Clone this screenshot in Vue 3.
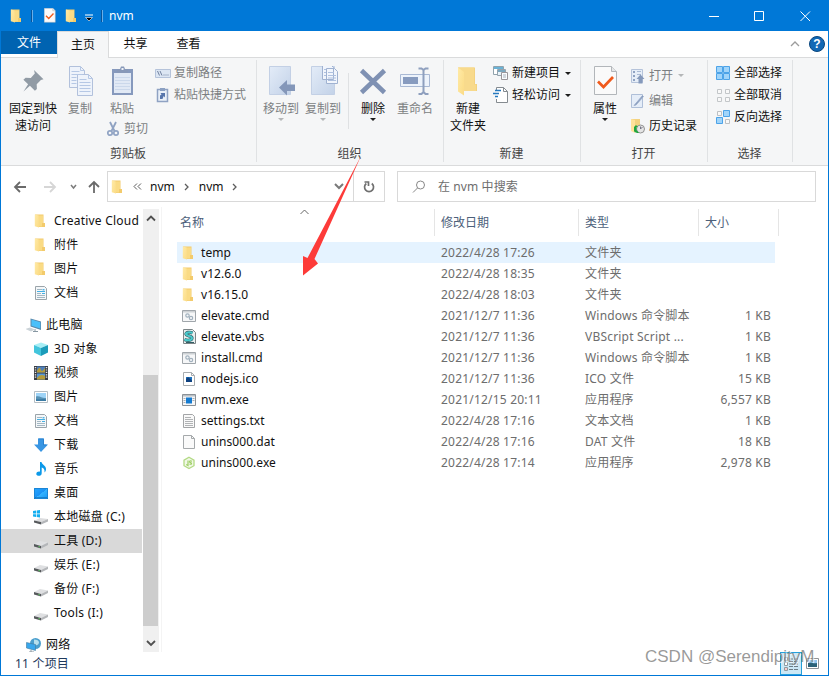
<template>
  <div class="window">
    <svg class="defs" width="0" height="0">
      <linearGradient id="g-folder" x1="0" y1="0" x2="1" y2="1">
        <stop offset="0" stop-color="#ffeaa6" /><stop offset="1" stop-color="#fbdb85" />
      </linearGradient>
      <linearGradient id="g-blue" x1="0" y1="0" x2="1" y2="1">
        <stop offset="0" stop-color="#e3ecf8" /><stop offset="1" stop-color="#c3d2e8" />
      </linearGradient>
      <linearGradient id="g-screen" x1="0" y1="0" x2="1" y2="1">
        <stop offset="0" stop-color="#27a7ff" /><stop offset=".5" stop-color="#1b92f5" /><stop offset=".51" stop-color="#35b3ff" /><stop offset="1" stop-color="#1495f5" />
      </linearGradient>

      <symbol id="folder" viewBox="0 0 16 16">
        <path d="M2 1.500h8.500V10H12v4H6z" fill="#f3cb6c" />
        <path d="M1.800 1.500l4.200 1v12l-4.200-1.200z" fill="url(#g-folder)" />
        <path d="M5.500 2.500H10V10h-1v3.500H6z" fill="#fadb85" />
      </symbol>
      <symbol id="folder-big" viewBox="0 0 32 32">
        <path d="M6 1.500h17V18h2v7H12z" fill="#f3d280" />
        <path d="M6 1.500h16v17h2V25H12z" fill="#f8da8c" />
        <path d="M6 1.500l6 4.500v23.500l-6-4z" fill="url(#g-folder)" />
      </symbol>
      <symbol id="pin" viewBox="0 0 32 32">
        <path d="M17 4l9.500 9.200-2.600.8-4.200 4.200.2 4.800-2 1.800-5-5-6.400 5.600 4.600-7.200-4.700-4.500 2.200-1.900 5.200.1 4-4.400z" fill="#919ba5" />
      </symbol>
      <symbol id="copy" viewBox="0 0 32 32">
        <g fill="#eef3fb" stroke="#b2c1dc">
          <path d="M5.500.5h11l4 4v17h-15z" /><path d="M13.500 8.500h11l4 4v17h-15z" />
        </g>
        <path d="M7.500 5.500h8M7.500 8.500h11M7.500 11.500h5M7.500 14.500h5M7.500 17.500h5M15.500 13.500h7M15.500 16.500h11M15.500 19.500h11M15.500 22.500h11M15.500 25.500h11M16.500.5v4h4M24.500 8.500v4h4" fill="none" stroke="#b6c8e5" />
      </symbol>
      <symbol id="paste" viewBox="0 0 32 32">
        <path d="M6 3h21v26H6z" fill="#8699bd" />
        <path d="M8 7h17v20H8z" fill="#e1e9f5" />
        <path d="M9 11.500h15M9 14.500h15M9 17.500h15M9 20.500h15M9 23.500h15" stroke="#cbd8eb" />
        <path d="M11 7V3h3l1-2.500h3L19 3h3v4z" fill="#8798b8" />
        <path d="M15.500 2h2v2h-2z" fill="#eef2f8" />
      </symbol>
      <symbol id="cut" viewBox="0 0 16 16">
        <path d="M5 1l4.500 9M11 1L6.500 10" stroke="#8fa2c2" stroke-width="1.800" />
        <g fill="none" stroke="#91a4c4" stroke-width="1.700"><circle cx="5" cy="12" r="2.200" /><circle cx="11" cy="12" r="2.200" /></g>
      </symbol>
      <symbol id="path" viewBox="0 0 16 16">
        <path d="M.5 4.500h15v8H.5z" fill="#dce6f3" stroke="#b5c3da" />
        <path d="M2.500 6l2 4.500M5 6l2 4.500M8.500 10h1M10.500 10h1M12.500 10h1" stroke="#71819f" />
      </symbol>
      <symbol id="shortcut" viewBox="0 0 16 16">
        <path d="M2.500 2.500h10v12h-10z" fill="#eaf0f8" stroke="#8fa2c3" stroke-width="1.500" />
        <path d="M5 1h5v3H5z" fill="#8ba0c2" />
        <path d="M5 12V8.500l1.500-1L5.500 6H10v4.500L8.700 9 7.500 12z" fill="#5876ab" />
      </symbol>
      <symbol id="move-to" viewBox="0 0 32 32">
        <path d="M4.500.5h21v28h-21z" fill="url(#g-blue)" stroke="#c3d0e5" />
        <path d="M14 21.500l8-7.500v4.500h8v6.500h-8v4.500z" fill="#8497b9" />
      </symbol>
      <symbol id="copy-to" viewBox="0 0 32 32">
        <path d="M4.500.5h23v28h-23z" fill="url(#g-blue)" stroke="#c3d0e5" />
        <path d="M15.500-.5h9l2 2v12h-11zM19.500 2.500h8l3 3v12h-11z" fill="#f1f5fc" stroke="#a0b2d1" />
        <path d="M17 3.500h2M17 6.500h2M17 9.500h2M21 6.500h6M21 9.500h8M21 12h8M21 14.500h8" stroke="#afc1df" />
      </symbol>
      <symbol id="delete" viewBox="0 0 32 32">
        <path d="M4.500 4.500l23 22M27.500 4.500l-23 22" stroke="#7f91b3" stroke-width="4.600" />
      </symbol>
      <symbol id="rename" viewBox="0 0 32 32">
        <path d="M1.500 8.500h29v12h-29z" fill="#edf3fb" stroke="#a9b9d4" />
        <path d="M4 11h15v7H4z" fill="#879bbf" />
        <path d="M19.500 2.500h3l2 1.500v22l-2 2h-3M29.500 2.500h-3l-2 1.500M24.500 26l2 2h3" fill="none" stroke="#8e9fbe" stroke-width="2" />
      </symbol>
      <symbol id="new-item" viewBox="0 0 16 16">
        <path d="M.5 1.500h10v8H.5z" fill="#fff" stroke="#90a2ac" /><path d="M1 2h9v2H1z" fill="#69b2d6" />
        <path d="M4.500 4.500h8v6h-8z" fill="#e7f2f8" stroke="#95a3ad" /><path d="M5 5h7v2H5z" fill="#7ba7bf" />
        <path d="M8.500 7.500h6v7h-6z" fill="#fafcff" stroke="#9b969a" /><path d="M10 10h3M10 12h3" stroke="#a8b3bc" />
      </symbol>
      <symbol id="easy" viewBox="0 0 16 16">
        <path d="M3.500.5h7l4 4v11h-11z" fill="#fff" stroke="#858b90" /><path d="M10.500.5v4h4" fill="none" stroke="#858b90" />
        <path d="M3 3h1v9H3z" fill="#fff" />
        <path d="M2 3.500h6M0 6.500h6M2 9.500h3" stroke="#2679be" stroke-width="1.400" />
      </symbol>
      <symbol id="props" viewBox="0 0 32 32">
        <path d="M5.500.5h17l5 5v23h-22z" fill="#fafafa" stroke="#b2b6ba" /><path d="M22.500.5v5h5" fill="#e6e7e8" stroke="#b2b6ba" />
        <path d="M9 15.500l5.500 5.500 9.500-10" fill="none" stroke="#f05a1c" stroke-width="2.700" />
      </symbol>
      <symbol id="open" viewBox="0 0 16 16">
        <path d="M1.500 1.500h11v13h-11z" fill="#e6eef8" stroke="#b5c3da" /><path d="M3 3h2v2H3zM3 7h2v2H3zM3 11h2v2H3z" fill="#8fa2c2" />
        <path d="M7 3.500h4M7 6.500h4" stroke="#a9bad5" /><path d="M10.500 6.500l4 4.500h-2v4.500h-4V11h-2z" fill="#8599bb" />
      </symbol>
      <symbol id="edit" viewBox="0 0 16 16">
        <path d="M1.500 1.500h11v13h-11z" fill="#e5edf8" stroke="#afbfd8" /><path d="M4 12.500L12.500 2.500l1 1L6 12z" fill="#8599bb" stroke="#9aacca" stroke-width=".8" />
      </symbol>
      <symbol id="history" viewBox="0 0 16 16">
        <path d="M1 1h9v13H5z" fill="#f3d280" /><path d="M1 1l4 1v13l-4-2z" fill="#ffe29a" />
        <circle cx="10.500" cy="11" r="4" fill="#e5e5e5" stroke="#929292" /><path d="M10.500 8.500V11l2-2" fill="none" stroke="#778" />
        <path d="M4 13V9l2-2 2 2H6.500v3l2.500 3c-2.500 0-4.500-.5-5-2z" fill="#20a63e" />
      </symbol>
      <symbol id="select-all" viewBox="0 0 16 16">
        <path d="M1.500 1.500h6v6h-6zM8.500 1.500h6v6h-6zM1.500 8.500h6v6h-6zM8.500 8.500h6v6h-6z" fill="#a0d4fa" stroke="#4ca3e8" />
      </symbol>
      <symbol id="select-none" viewBox="0 0 16 16">
        <path d="M2.500 2.500h4v4h-4zM10.500 2.500h4v4h-4zM2.500 10.500h4v4h-4zM10.500 10.500h4v4h-4z" fill="#f9f9f9" stroke="#c3c6c9" />
      </symbol>
      <symbol id="invert" viewBox="0 0 16 16">
        <path d="M2.500 2.500h4v4h-4zM10.500 10.500h4v4h-4z" fill="#f9f9f9" stroke="#bdc0c3" />
        <path d="M8.500 1.500h6v6h-6zM1.500 8.500h6v6h-6z" fill="#a0d4fa" stroke="#4ca3e8" />
      </symbol>

      <symbol id="doc" viewBox="0 0 16 16">
        <path d="M2.500 1.500h9l2 2v11h-11z" fill="#f4f7f9" stroke="#9ba4aa" />
        <path d="M4 4.500h5M4 8.500h4M4 10.500h8M4 12.500h8" stroke="#a3b7c3" /><path d="M4 6.500h8M9 8.500h3" stroke="#45b0e4" />
        <path d="M9.500 4h2v1.500h-2z" fill="#56b5e4" />
      </symbol>
      <symbol id="pc" viewBox="0 0 16 16">
        <path d="M4.500 1.500l10.500 3v8.500L4.500 9.500z" fill="#5a86a8" /><path d="M5.500 2.500l8.800 2.700v6.200L5.500 8.800z" fill="#4bc0fa" />
        <path d="M9 12v2M7 14.500h5" stroke="#8797a2" /><path d="M-.5 12l4.500-1.500 5 2-4 2z" fill="#cbd3d8" />
      </symbol>
      <symbol id="cube" viewBox="0 0 16 16">
        <path d="M1 4l7-2.500L15 4l-7 3z" fill="#a7eef5" /><path d="M1 4l7 3v8l-7-3.500z" fill="#43c5dc" /><path d="M15 4L8 7v8l7-3.500z" fill="#1b9cba" />
      </symbol>
      <symbol id="video" viewBox="0 0 16 16">
        <path d="M1 1h14v14H1z" fill="#393d43" /><path d="M4 1.500h8v6H4z" fill="#4d7eb9" /><path d="M4 8.500h8v6H4z" fill="#5597d8" />
        <path d="M4 6c2-4 3-4 4-1s3-1 4-2v4.500H4zM4 13c2-3 5-4 8-2v3.500H4z" fill="#b59b3a" />
        <path d="M2.500 2v12M13.500 2v12" stroke="#e8e8e8" stroke-width="1.500" stroke-dasharray="1.200 1.200" />
      </symbol>
      <symbol id="picture" viewBox="0 0 16 16">
        <path d="M1.500 2.500h13v11h-13z" fill="#fff" stroke="#b5bec4" /><path d="M3 4h10v8H3z" fill="#9fd4f7" />
        <path d="M3 7.500c4-1 6 2 10 1.500v3H3z" fill="#5792b5" /><path d="M3 10c4 1 6-1 10 .5V12H3z" fill="#3b7ba4" />
      </symbol>
      <symbol id="download" viewBox="0 0 16 16">
        <path d="M5 1.500h6v6h4l-7 7.500-7-7.500h4z" fill="#3996e3" /><path d="M5.500 2h5v6h3" fill="none" stroke="#2b82cf" />
      </symbol>
      <symbol id="music" viewBox="0 0 16 16">
        <path d="M7 1h1.500c.5 3 4.500 3.500 4.500 7 0 1.500-.5 2.500-1.500 3.500C12 8.500 10.500 7 8.700 6.500v5.800c0 3.500-5.700 3.200-5.400.4.200-1.700 2-2.400 3.700-2z" fill="#0b99e9" />
      </symbol>
      <symbol id="desktop" viewBox="0 0 16 16">
        <path d="M1 3h14v11H1z" fill="url(#g-screen)" /><path d="M1 12.500h14V14H1z" fill="#0c5d9e" /><path d="M1.500 3.500h13v10h-13z" fill="none" stroke="#1b85d5" />
      </symbol>
      <symbol id="drive" viewBox="0 0 16 16">
        <path d="M1 11l6-3 8 1.500-7 3.500z" fill="#dfe0e2" /><path d="M1 11l7 2v2.500l-7-2z" fill="#56595c" /><path d="M15 9.500V12l-7 3.500V13z" fill="#b4b6b9" />
        <path d="M5.500 13.500l1.500.5" stroke="#5fd063" />
      </symbol>
      <symbol id="drive-c" viewBox="0 0 16 16">
        <path d="M1 12l6-3 8 1-7 3z" fill="#dcdddf" /><path d="M1 11.500l7 1.500v2.500l-7-2z" fill="#56595c" /><path d="M15 10v2.500l-7 3V13z" fill="#b4b6b9" />
        <path d="M0 2l3-.5V4.500H0zM3.700 1.400L7 1v3.500H3.700zM0 5.200h3V8l-3-.4zM3.700 5.200H7v3.300L3.700 8z" fill="#13aef0" />
      </symbol>
      <symbol id="network" viewBox="0 0 16 16">
        <circle cx="9.500" cy="6.500" r="5.500" fill="#4b9fce" /><path d="M8 2.500c3 0 5 1 5 3s-3 4-5 2z" fill="#b5dfed" />
        <path d="M.5 5.500l9 2v6l-9-2.500z" fill="#38a7ed" stroke="#43789b" stroke-width=".6" /><path d="M5 13v2M3 15h5" stroke="#8a969e" />
      </symbol>

      <symbol id="cmd" viewBox="0 0 16 16">
        <path d="M1.500 2.500h13v11h-13z" fill="#f6f7f8" stroke="#a0a6ab" /><path d="M2 3h12v1.500H2z" fill="#cdd1d4" />
        <g fill="none" stroke="#a2b1be" stroke-width="1.200"><circle cx="6.500" cy="7.500" r="1.700" /><circle cx="10" cy="10" r="1.700" /></g>
      </symbol>
      <symbol id="vbs" viewBox="0 0 16 16">
        <path d="M2.500.5h9l3 3v11h-12z" fill="#e9f0f0" stroke="#7c8587" />
        <path d="M11.500 4c-3-1.500-7-.5-6.500 1.300s6 1.500 6 3.700-4 3-7.500 1.500" fill="none" stroke="#345d65" stroke-width="3.200" />
        <path d="M11.500 4c-3-1.500-7-.5-6.500 1.300s6 1.500 6 3.700-4 3-7.500 1.500" fill="none" stroke="#49c9cb" stroke-width="2.100" />
        <path d="M5 13.500h8" stroke="#345d65" />
      </symbol>
      <symbol id="ico" viewBox="0 0 16 16">
        <path d="M2.500 1.500h8l3 3v10h-11z" fill="#fff" stroke="#a8acaf" /><path d="M10.500 1.500v3h3" fill="none" stroke="#a8acaf" />
        <path d="M5 6h6v5H5z" fill="#1e72bd" /><path d="M5 8l2-2 4 3.500V11H5z" fill="#0e4180" />
      </symbol>
      <symbol id="exe" viewBox="0 0 16 16">
        <path d="M1.500 2.500h13v11h-13z" fill="#f5f6f7" stroke="#8b9197" /><path d="M2 3h12v1.500H2z" fill="#bac0c5" />
        <path d="M5 5.500h6v6H5z" fill="#147bd1" /><path d="M2.500 6.500h2M2.500 8.500h2M2.500 10.500h2M11.500 6.500h2M11.500 8.500h2" stroke="#abb1b7" />
      </symbol>
      <symbol id="txt" viewBox="0 0 16 16">
        <path d="M2.500 1.500h9l2 2v11h-11z" fill="#f9f9f9" stroke="#a3a5a7" /><path d="M4 4.500h6M4 6.500h8M4 8.500h8M4 10.500h8M4 12.500h8" stroke="#b1b3b5" />
      </symbol>
      <symbol id="dat" viewBox="0 0 16 16">
        <path d="M2.500 1.500h8l3 3v10h-11z" fill="#fafafa" stroke="#a5a9ab" /><path d="M10.500 1.500v3h3" fill="none" stroke="#a5a9ab" />
      </symbol>
      <symbol id="node" viewBox="0 0 16 16">
        <path d="M8 2.200l5 2.900v5.600L8 13.600l-5-2.900V5.100z" fill="#f1f8e7" stroke="#b3da85" stroke-width="1.300" />
        <path d="M7 5.500v5l-1.800-1M11 6.200c-3-1-3 1-1.500 1.400s1.500 2-1 1.600" fill="none" stroke="#a0cf68" stroke-width="1.200" />
      </symbol>
    </svg>

    <header class="titlebar">
      <svg class="icon quick-folder"><use href="#folder" /></svg>
      <i class="bar"></i>
      <svg class="icon quick-props" viewBox="5 0 24 30"><use href="#props" width="32" height="32" /></svg>
      <svg class="icon quick-new"><use href="#folder" /></svg>
      <svg class="quick-more" width="8" height="8"><path d="M0 1h8" stroke="#fff" /><path d="M.5 3.500h7L4 7z" fill="#000" stroke="#fff" stroke-width=".6" /></svg>
      <i class="bar"></i>
      <span class="title">nvm</span>
      <svg class="controls" width="120" height="20" fill="none" stroke="#fff">
        <path d="M9 10.500h10M54.500 5.500h9v9h-9zM100.500 5.500l9.500 9.500M110 5.500L100.500 15" />
      </svg>
    </header>

    <nav class="tabs">
      <span class="tab file">文件</span>
      <span class="tab active">主页</span>
      <span class="tab">共享</span>
      <span class="tab">查看</span>
      <svg class="collapse" width="10" height="6"><path d="M1 5l4-4 4 4" fill="none" stroke="#9c9c9c" stroke-width="1.300" /></svg>
      <span class="help">?</span>
    </nav>

    <section class="ribbon">
      <div v-for="group in ribbon" :key="group.label" class="group" :class="group.cls">
        <div class="tools">
          <template v-for="(col, c) in group.cols" :key="c">
            <i v-if="col === '|'" class="split"></i>
            <div v-else class="col" :class="{ list: !col.big }">
              <div v-if="col.big" class="big" :class="[{ off: col.off }, col.big]">
                <svg class="icon32"><use :href="'#' + col.big" /></svg>
                <span v-for="line in col.lines" :key="line">{{ line }}</span>
                <i v-if="col.arrow" class="caret"></i>
              </div>
              <div v-for="item in col.items" :key="item.text" class="small" :class="{ off: item.off }">
                <svg class="icon"><use :href="'#' + item.icon" /></svg>
                <span>{{ item.text }}</span>
                <i v-if="item.arrow" class="caret"></i>
              </div>
            </div>
          </template>
        </div>
        <div class="group-label">{{ group.label }}</div>
      </div>
    </section>

    <section class="address-row">
      <svg class="nav-arrows" width="106" height="20" fill="none" stroke-width="1.800">
        <path d="M14 10h11M19 5l-5 5 5 5" stroke="#6a6a6a" />
        <path d="M43 10h11M49 5l5 5-5 5" stroke="#d6d6d6" />
        <path d="M70 8l2.500 3L75 8" stroke="#7c7c7c" stroke-width="1.500" />
        <path d="M93 16V5M88 10l5-5 5 5" stroke="#6a6a6a" />
      </svg>
      <div class="address">
        <svg class="icon"><use href="#folder" /></svg>
        <span class="chev">
          <svg width="9" height="7"><path d="M4 .5l-3 3 3 3M8 .5l-3 3 3 3" fill="none" stroke="#5d5d5d" /></svg>
        </span>
        <template v-for="(part, i) in ['nvm', 'nvm']" :key="i">
          <span class="crumb">{{ part }}</span>
          <svg class="crumb-sep" width="5" height="8"><path d="M1 1l3 3-3 3" fill="none" stroke="#5d5d5d" stroke-width="1.300" /></svg>
        </template>
        <svg class="drop" width="10" height="7"><path d="M1 1l4 4 4-4" fill="none" stroke="#7a7a7a" stroke-width="2" /></svg>
        <span class="refresh">
          <svg width="12" height="13" fill="none" stroke="#707070" stroke-width="1.700"><path d="M3.300 3.500A4.500 4.500 0 1 0 8.800 3.500M1.500 2h4v4" /></svg>
        </span>
      </div>
      <div class="search">
        <svg width="14" height="14" fill="none" stroke="#888"><circle cx="8.500" cy="5" r="4" /><path d="M5.500 8L1 12.500" /></svg>
        <span>在 nvm 中搜索</span>
      </div>
    </section>

    <main class="content">
      <aside class="tree">
        <div v-for="node in tree" :key="node.id" class="node" :class="{ root: node.root, selected: node.selected }">
          <svg class="icon"><use :href="'#' + node.icon" /></svg>
          <span>{{ node.text }}</span>
        </div>
      </aside>
      <div class="scrollbar">
        <svg width="10" height="7"><path d="M1 5.500l4-4 4 4" fill="none" stroke="#505050" stroke-width="1.800" /></svg>
        <div class="thumb"></div>
        <svg width="10" height="7"><path d="M1 1l4 4 4-4" fill="none" stroke="#505050" stroke-width="1.800" /></svg>
      </div>
      <div class="files">
        <div class="row head">
          <span class="name">名称</span>
          <span class="date">修改日期</span>
          <span class="type">类型</span>
          <span class="size">大小</span>
          <svg class="sort" width="9" height="6"><path d="M.5 5l4-4 4 4" fill="none" stroke="#666" /></svg>
        </div>
        <div v-for="file in files" :key="file.name" class="row" :class="{ hover: file.name === 'temp' }">
          <span class="name"><svg class="icon"><use :href="'#' + file.icon" /></svg>{{ file.name }}</span>
          <span class="date">{{ file.date }}</span>
          <span class="type">{{ file.type }}</span>
          <span class="size">{{ file.size }}</span>
        </div>
      </div>
    </main>

    <footer class="status">
      <span class="count">11 个项目</span>
      <span class="view on">
        <svg width="16" height="16"><path d="M1.500 1.500h3v3h-3zM1.500 6.500h3v3h-3zM1.500 11.500h3v3h-3z" fill="#fff" stroke="#8f9aa0" /><path d="M6 3h4M11 3h4M6 5.500h4M11 5.500h4M6 8h4M11 8h4M6 10.500h4M11 10.500h4M6 13.500h4M11 13.500h4" stroke="#6d7d86" /><path d="M2.500 12.500h1v1h-1z" fill="#d33" /></svg>
      </span>
      <span class="view">
        <svg width="14" height="12"><path d="M.5.5h12v10H.5z" fill="#fff" stroke="#8f9498" /><path d="M2 2h9v7H2z" fill="#8fc5ee" /><path d="M2 5c4-1 5 1 9 0v4H2z" fill="#2b6279" /></svg>
      </span>
    </footer>

    <div class="watermark">CSDN @SerendipityM</div>
    <svg class="pointer" width="62" height="124"><path d="M61 4L14.500 107l3.500 4.500L3 123.500V104l4.500 2z" fill="#fd3b39" /></svg>
  </div>
</template>

<script setup>
const ribbon = [
  {
    label: '剪贴板',
    cls: 'clipboard',
    cols: [
      { big: 'pin', lines: ['固定到快', '速访问'] },
      { big: 'copy', lines: ['复制'], off: true },
      { big: 'paste', lines: ['粘贴'], off: true, items: [{ icon: 'cut', text: '剪切', off: true }] },
      { items: [{ icon: 'path', text: '复制路径', off: true }, { icon: 'shortcut', text: '粘贴快捷方式', off: true }] }
    ]
  },
  {
    label: '组织',
    cls: 'organize',
    cols: [
      { big: 'move-to', lines: ['移动到'], off: true, arrow: true },
      { big: 'copy-to', lines: ['复制到'], off: true, arrow: true },
      '|',
      { big: 'delete', lines: ['删除'], arrow: true },
      { big: 'rename', lines: ['重命名'], off: true }
    ]
  },
  {
    label: '新建',
    cls: 'create',
    cols: [
      { big: 'folder-big', lines: ['新建', '文件夹'] },
      { items: [{ icon: 'new-item', text: '新建项目', arrow: true }, { icon: 'easy', text: '轻松访问', arrow: true }] }
    ]
  },
  {
    label: '打开',
    cls: 'opening',
    cols: [
      { big: 'props', lines: ['属性'], arrow: true },
      { items: [{ icon: 'open', text: '打开', off: true, arrow: true }, { icon: 'edit', text: '编辑', off: true }, { icon: 'history', text: '历史记录' }] }
    ]
  },
  {
    label: '选择',
    cls: 'selecting',
    cols: [
      { items: [{ icon: 'select-all', text: '全部选择' }, { icon: 'select-none', text: '全部取消' }, { icon: 'invert', text: '反向选择' }] }
    ]
  }
]

const tree = [
  { icon: 'folder', text: 'Creative Cloud' },
  { icon: 'folder', text: '附件' },
  { icon: 'folder', text: '图片' },
  { icon: 'doc', text: '文档' },
  { icon: 'pc', text: '此电脑', root: true },
  { icon: 'cube', text: '3D 对象' },
  { icon: 'video', text: '视频' },
  { icon: 'picture', text: '图片' },
  { icon: 'doc', text: '文档' },
  { icon: 'download', text: '下载' },
  { icon: 'music', text: '音乐' },
  { icon: 'desktop', text: '桌面' },
  { icon: 'drive-c', text: '本地磁盘 (C:)' },
  { icon: 'drive', text: '工具 (D:)', selected: true },
  { icon: 'drive', text: '娱乐 (E:)' },
  { icon: 'drive', text: '备份 (F:)' },
  { icon: 'drive', text: 'Tools (I:)' },
  { icon: 'network', text: '网络', root: true }
].map((node, id) => ({ id, ...node }))

const files = [
  { icon: 'folder', name: 'temp', date: '2022/4/28 17:26', type: '文件夹' },
  { icon: 'folder', name: 'v12.6.0', date: '2022/4/28 18:35', type: '文件夹' },
  { icon: 'folder', name: 'v16.15.0', date: '2022/4/28 18:03', type: '文件夹' },
  { icon: 'cmd', name: 'elevate.cmd', date: '2021/12/7 11:36', type: 'Windows 命令脚本', size: '1 KB' },
  { icon: 'vbs', name: 'elevate.vbs', date: '2021/12/7 11:36', type: 'VBScript Script ...', size: '1 KB' },
  { icon: 'cmd', name: 'install.cmd', date: '2021/12/7 11:36', type: 'Windows 命令脚本', size: '1 KB' },
  { icon: 'ico', name: 'nodejs.ico', date: '2021/12/7 11:36', type: 'ICO 文件', size: '15 KB' },
  { icon: 'exe', name: 'nvm.exe', date: '2021/12/15 20:11', type: '应用程序', size: '6,557 KB' },
  { icon: 'txt', name: 'settings.txt', date: '2022/4/28 17:16', type: '文本文档', size: '1 KB' },
  { icon: 'dat', name: 'unins000.dat', date: '2022/4/28 17:16', type: 'DAT 文件', size: '18 KB' },
  { icon: 'node', name: 'unins000.exe', date: '2022/4/28 17:14', type: '应用程序', size: '2,978 KB' }
]
</script>

<style>
body {
  margin: 0;
}
</style>

<style scoped>
.window {
  position: relative;
  display: flex;
  flex-direction: column;
  box-sizing: border-box;
  width: 829px;
  height: 676px;
  border: 1px solid #0078d7;
  border-top: 0;
  background: #fff;
  color: #111;
  font: 12px/18px "Noto Sans", "Noto Sans CJK SC", sans-serif;
  overflow: hidden;
  white-space: nowrap;
}

.window *, .window *::before {
  box-sizing: border-box;
}

.defs {
  position: absolute;
}

svg {
  display: block;
  flex: none;
}

.icon {
  width: 16px;
  height: 16px;
}

/* 标题栏 */
.titlebar {
  display: flex;
  align-items: center;
  flex: none;
  height: 31px;
  padding-left: 8px;
  background: #0078d7;
  color: #fff;
}
.bar {
  width: 2px;
  height: 12px;
  border-left: 1px solid #06549b;
  border-right: 1px solid #69aee8;
}
.quick-folder {
  margin-right: 6px;
}
.quick-props {
  width: 12px;
  height: 15px;
  margin-left: 11px;
}
.quick-new {
  margin-left: 8px;
}
.quick-more {
  margin: 4px 8px 0 5px;
}
.title {
  margin-left: 6px;
}
.controls {
  margin-left: auto;
  margin-right: 8px;
}

/* 选项卡 */
.tabs {
  display: flex;
  align-items: center;
  flex: none;
  height: 27px;
  border-bottom: 1px solid #dadbdc;
}
.tab {
  width: 53px;
  height: 27px;
  line-height: 26px;
  text-align: center;
}
.tab.file {
  width: 56px;
  height: 23px;
  line-height: 24px;
  margin-bottom: 4px;
  background: #0063b1;
  color: #fff;
}
.tab.active {
  width: 52px;
  height: 28px;
  margin-bottom: -2px;
  border: 1px solid #dadbdc;
  border-bottom: 0;
  background: #f5f6f7;
}
.collapse {
  margin-left: auto;
}
.help {
  width: 16px;
  height: 16px;
  margin: 0 3px 0 9px;
  border: 1px solid #0a477e;
  border-radius: 50%;
  background: #1269b5;
  color: #fff;
  font: bold 12px/14px "Liberation Sans", sans-serif;
  text-align: center;
}

/* 功能区 */
.ribbon {
  display: flex;
  flex: none;
  height: 108px;
  padding: 2px 0 3px;
  background: #f5f6f7;
  border-bottom: 1px solid #dadbdc;
}
.group {
  display: flex;
  flex-direction: column;
  flex: none;
  border-right: 1px solid #e0e2e4;
}
.group.clipboard { width: 256px; }
.group.organize { width: 187px; }
.group.create { width: 137px; }
.group.opening { width: 127px; }
.group.selecting { width: 85px; }
.tools {
  display: flex;
  flex: 1;
}
.clipboard .tools { padding-left: 6px; }
.organize .tools { padding-left: 3px; }
.create .tools { padding-left: 1px; }
.opening .tools { padding-left: 2px; }
.selecting .tools { padding-left: 7px; }
.col {
  width: 42px;
}
.col:first-child {
  width: 52px;
}
.organize .col:first-child {
  width: 42px;
}
.create .col:first-child {
  width: 46px;
}
.opening .col:first-child {
  width: 44px;
}
.big {
  display: flex;
  flex-direction: column;
  align-items: center;
  padding-top: 6px;
}
.big.pin span + span {
  margin-top: -1px;
}
.big.folder-big span + span {
  margin-top: -1px;
}
.icon32 {
  width: 32px;
  height: 32px;
  margin-bottom: 2px;
  overflow: visible;
}
.off {
  color: #7c7f82;
}
.caret {
  width: 0;
  height: 0;
  border: 3px solid transparent;
  border-top-color: #1c1c1c;
  border-bottom: 0;
}
.off .caret {
  border-top-color: #b4b6b8;
}
.small {
  display: flex;
  align-items: center;
  height: 22px;
}
.small .icon {
  margin-right: 2px;
}
.small .caret {
  margin-left: 5px;
}
.col .big + .small {
  height: 22px;
  padding-left: 4px;
}
.col .big + .small .icon {
  margin-right: 3px;
}
.list {
  width: auto;
  padding-top: 2px;
}
.clipboard .list {
  padding-left: 12px;
}
.clipboard .list .icon {
  margin-right: 3px;
}
.create .list {
  padding-left: 2px;
}
.create .list .icon {
  margin-right: 3px;
}
.opening .list {
  padding: 3px 0 0 3px;
}
.opening .list .icon {
  margin-right: 3px;
}
.opening .small {
  height: 25px;
}
.selecting .list .icon {
  margin-right: 3px;
}
.split {
  width: 1px;
  height: 56px;
  margin: 13px 3px 0 4px;
  background: #dfe1e3;
}
.group-label {
  height: 17px;
  padding-right: 1px;
  text-align: center;
  color: #444;
}

/* 地址栏 */
.address-row {
  display: flex;
  align-items: center;
  flex: none;
  height: 41px;
}
.address {
  display: flex;
  align-items: center;
  width: 278px;
  height: 31px;
  border: 1px solid #d9d9d9;
}
.address .icon {
  margin: 0 7px 0 2px;
}
.crumb {
  margin-left: 8px;
  line-height: 17px;
  margin-bottom: 1px;
}
.crumb-sep {
  margin-left: 9px;
}
.crumb-sep + .crumb {
  margin-left: 10px;
}
.drop {
  margin-left: auto;
  margin-right: 9px;
}
.refresh {
  display: flex;
  align-items: center;
  justify-content: center;
  width: 31px;
  height: 29px;
  border-left: 1px solid #d9d9d9;
}
.search {
  display: flex;
  align-items: center;
  width: 419px;
  height: 31px;
  margin-left: 12px;
  padding-left: 14px;
  border: 1px solid #d9d9d9;
  color: #6d6d6d;
}
.search span {
  margin-left: 12px;
  letter-spacing: 0.1px;
}

/* 导航窗格 */
.content {
  display: flex;
  flex: none;
  height: 445px;
}
.tree {
  width: 141px;
  padding-top: 2px;
  overflow: hidden;
  letter-spacing: 0.22px;
}
.node {
  display: flex;
  align-items: center;
  height: 24px;
  padding-left: 32px;
}
.node span {
  margin: -1px 0 0 5px;
}
.node.root {
  margin-top: 8px;
  padding-left: 25px;
}
.node.root span {
  margin-left: 4px;
}
.node.selected {
  background: #d9d9d9;
}
.scrollbar {
  display: flex;
  flex-direction: column;
  align-items: center;
  width: 16px;
  margin: 2px 0 0 1px;
  padding: 6px 0 5px;
  background: #f0f0f0;
}
.thumb {
  width: 15px;
  height: 251px;
  margin: auto 1px 14px 0;
  background: #cdcdcd;
}

/* 文件列表 */
.files {
  flex: 1;
  margin-left: 2px;
  padding-left: 15px;
  border-left: 1px solid #f4f4f4;
}
.row {
  display: flex;
  align-items: center;
  width: 598px;
  height: 21px;
  color: #6d6d6d;
}
.row.hover {
  background: #e5f3ff;
}
.name {
  display: flex;
  align-items: center;
  width: 264px;
  padding-left: 4px;
  color: #111;
  letter-spacing: 0.05px;
}
.name .icon {
  margin-right: 4px;
}
.date {
  width: 144px;
  letter-spacing: 0.2px;
}
.type {
  width: 120px;
  letter-spacing: 0.2px;
}
.size {
  width: 66px;
  text-align: right;
  letter-spacing: 0.2px;
}
.row.head {
  position: relative;
  width: 602px;
  height: 27px;
  margin: 2px 0 6px;
  color: #4c607a;
}
.head span {
  height: 27px;
  line-height: 27px;
  border-right: 1px solid #e5e5e5;
  letter-spacing: 0;
}
.head .name {
  width: 258px;
  padding-left: 3px;
  color: #4c607a;
}
.head .date,
.head .type,
.head .size {
  padding-left: 6px;
  text-align: left;
}
.head .size {
  width: 80px;
}
.sort {
  position: absolute;
  left: 123px;
  top: 0;
}

/* 状态栏 */
.status {
  display: flex;
  align-items: center;
  flex: 1;
  color: #1e395b;
}
.count {
  margin: 0 auto 0 14px;
  letter-spacing: 0.2px;
}
.view {
  display: flex;
  align-items: center;
  justify-content: center;
  width: 22px;
  height: 23px;
  margin-right: 4px;
}
.view.on {
  margin-right: 0;
  border: 1px solid #26a0da;
  background: #cbe8f6;
}

.watermark {
  position: absolute;
  left: 644px;
  top: 647px;
  color: rgba(120, 120, 120, 0.75);
  font: 17px/20px "Liberation Sans", sans-serif;
  text-shadow: 1px 1px 0 rgba(255, 255, 255, 0.7);
}
.pointer {
  position: absolute;
  left: 299px;
  top: 152px;
}
</style>
